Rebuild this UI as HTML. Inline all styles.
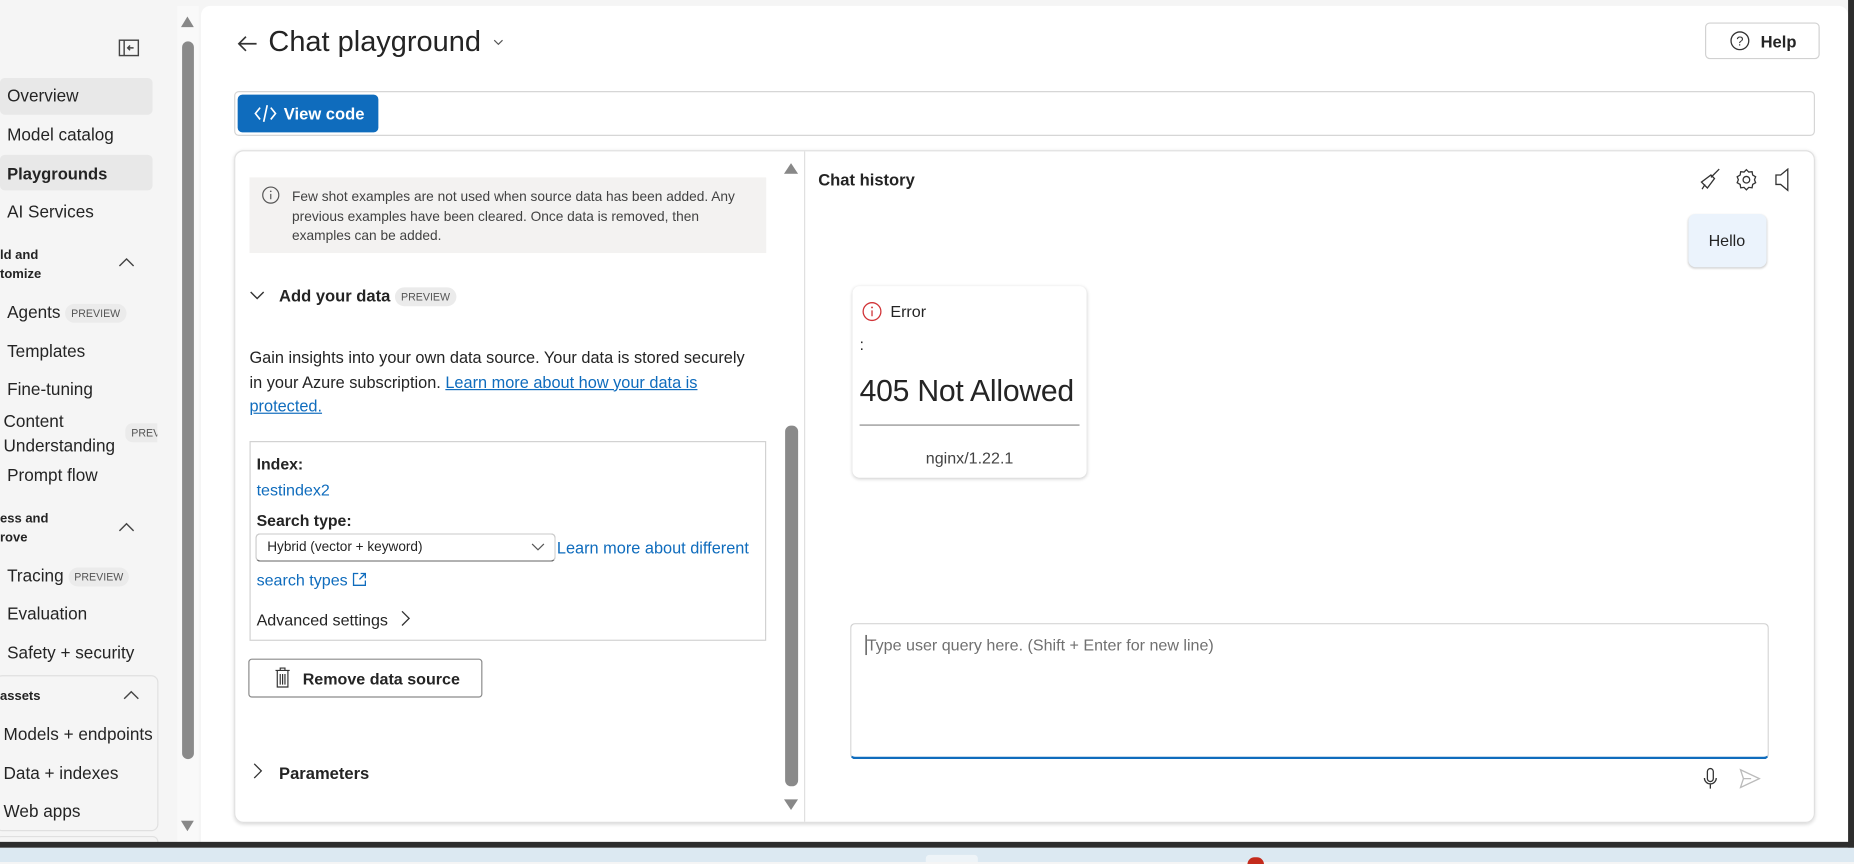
<!DOCTYPE html>
<html><head><meta charset="utf-8">
<style>
*{box-sizing:border-box;margin:0;padding:0}
html,body{width:1854px;height:862px;overflow:hidden;background:#f5f5f5;font-family:"Liberation Sans",sans-serif;color:#242424}
#root{position:absolute;left:0;top:0;width:1568px;height:729px;transform:scale(1.18240);transform-origin:0 0;background:#f5f5f5}
.a{position:absolute}
.nav{font-size:14.5px;color:#242424;white-space:nowrap}
.sel{background:#e8e8e8;border-radius:4px}
.badge{display:inline-block;font-size:9px;font-weight:normal;background:#ebebeb;color:#555;padding:3px 5px;border-radius:8px;vertical-align:middle;margin-left:4px}
.sec{font-size:11px;font-weight:bold;color:#242424;line-height:16px}
.link{color:#0f6cbd}
svg{display:block}
</style></head><body><div id="root">
<svg class="a" style="left:100px;top:33px" width="18" height="15" viewBox="0 0 18 15"><rect x="1" y="1" width="16" height="13" fill="none" stroke="#444" stroke-width="1.2"/><line x1="5" y1="1" x2="5" y2="14" stroke="#444" stroke-width="1.2"/><path d="M13 7.5H8M10 5.5L8 7.5L10 9.5" fill="none" stroke="#444" stroke-width="1.2"/></svg>
<div class="a sel" style="left:0;top:66px;width:129px;height:31px"></div>
<div class="a nav" style="left:6px;top:74px">Overview</div>
<div class="a nav" style="left:6px;top:107px">Model catalog</div>
<div class="a sel" style="left:0;top:131px;width:129px;height:30px"></div>
<div class="a nav" style="left:6px;top:139px;font-weight:bold;font-size:14px">Playgrounds</div>
<div class="a nav" style="left:6px;top:172px">AI Services</div>
<div class="a sec" style="left:0;top:208px">ld and<br>tomize</div>
<svg class="a" style="left:100px;top:217px" width="14" height="9"><path d="M1 8L7 2L13 8" fill="none" stroke="#444" stroke-width="1.2"/></svg>
<div class="a nav" style="left:6px;top:257px">Agents<span class="badge">PREVIEW</span></div>
<div class="a nav" style="left:6px;top:290px">Templates</div>
<div class="a nav" style="left:6px;top:322px">Fine-tuning</div>
<div class="a nav" style="left:3px;top:347px;line-height:21px">Content<br>Understanding</div>
<div class="a badge" style="left:102px;top:358px;width:27px;overflow:hidden;border-radius:6px 0 0 6px">PREVIEW</div>
<div class="a nav" style="left:6px;top:395px">Prompt flow</div>
<div class="a sec" style="left:0;top:431px">ess and<br>rove</div>
<svg class="a" style="left:100px;top:441px" width="14" height="9"><path d="M1 8L7 2L13 8" fill="none" stroke="#444" stroke-width="1.2"/></svg>
<div class="a nav" style="left:6px;top:480px">Tracing<span class="badge">PREVIEW</span></div>
<div class="a nav" style="left:6px;top:512px">Evaluation</div>
<div class="a nav" style="left:6px;top:545px">Safety + security</div>
<div class="a" style="left:-4px;top:571px;width:138px;height:132px;border:1px solid #e0e0e0;border-radius:6px"></div>
<div class="a sec" style="left:0;top:581px">assets</div>
<svg class="a" style="left:104px;top:583px" width="14" height="9"><path d="M1 8L7 2L13 8" fill="none" stroke="#444" stroke-width="1.2"/></svg>
<div class="a nav" style="left:3px;top:614px">Models + endpoints</div>
<div class="a nav" style="left:3px;top:647px">Data + indexes</div>
<div class="a nav" style="left:3px;top:679px">Web apps</div>
<div class="a" style="left:-4px;top:707px;width:138px;height:10px;border:1px solid #e0e0e0;border-radius:6px"></div>
<div class="a" style="left:150px;top:5px;width:18px;height:707px;background:#f9f9f9"></div>
<svg class="a" style="left:153px;top:14px" width="11" height="9"><path d="M0 9L5.5 0L11 9Z" fill="#888"/></svg>
<div class="a" style="left:154px;top:35px;width:10px;height:607px;background:#8a8a8a;border-radius:5px"></div>
<svg class="a" style="left:153px;top:694px" width="11" height="9"><path d="M0 0L5.5 9L11 0Z" fill="#888"/></svg>
<div class="a" style="left:170px;top:5px;width:1393px;height:707px;background:#fff;border-radius:8px 8px 0 0"></div>
<svg class="a" style="left:200px;top:29px" width="18" height="16"><path d="M17 8H2M8 2L2 8L8 14" fill="none" stroke="#333" stroke-width="1.4"/></svg>
<div class="a" style="left:227px;top:22px;font-size:24.5px;font-weight:500;color:#242424">Chat playground</div>
<svg class="a" style="left:417px;top:33px" width="9" height="6"><path d="M1 1L4.5 4.5L8 1" fill="none" stroke="#555" stroke-width="1"/></svg>
<div class="a" style="left:1442px;top:19px;width:97px;height:31px;border:1px solid #d1d1d1;border-radius:4px"></div>
<svg class="a" style="left:1463px;top:26px" width="17" height="17"><circle cx="8.5" cy="8.5" r="7.5" fill="none" stroke="#333" stroke-width="1.1"/><text x="8.5" y="12.5" text-anchor="middle" font-size="11" font-family="Liberation Sans" fill="#333">?</text></svg>
<div class="a" style="left:1489px;top:27px;font-size:14px;font-weight:bold;color:#242424">Help</div>
<div class="a" style="left:198px;top:77px;width:1337px;height:38px;border:1px solid #d6d6d6;border-radius:4px"></div>
<div class="a" style="left:201px;top:80px;width:119px;height:32px;background:#0f6cbd;border-radius:4px"></div>
<svg class="a" style="left:215px;top:88px" width="19" height="16"><path d="M5 3L1 8L5 13M14 3L18 8L14 13M11 1L8 15" fill="none" stroke="#fff" stroke-width="1.4"/></svg>
<div class="a" style="left:240px;top:88px;font-size:14px;font-weight:bold;color:#fff">View code</div>
<div class="a" style="left:198px;top:127px;width:1337px;height:569px;border:1px solid #e0e0e0;border-radius:8px;box-shadow:0 1px 3px rgba(0,0,0,.15)"></div>
<div class="a" style="left:680px;top:128px;width:1px;height:567px;background:#e0e0e0"></div>
<svg class="a" style="left:663px;top:138px" width="12" height="9"><path d="M0 9L6 0L12 9Z" fill="#888"/></svg>
<div class="a" style="left:664px;top:360px;width:11px;height:305px;background:#8a8a8a;border-radius:5px"></div>
<svg class="a" style="left:663px;top:676px" width="12" height="9"><path d="M0 0L6 9L12 0Z" fill="#888"/></svg>
<div class="a" style="left:211px;top:150px;width:437px;height:64px;background:#f3f2f1"></div>
<svg class="a" style="left:221px;top:157px" width="16" height="16"><circle cx="8" cy="8" r="6.8" fill="none" stroke="#555" stroke-width="1"/><line x1="8" y1="7" x2="8" y2="11.5" stroke="#555"/><circle cx="8" cy="4.8" r=".7" fill="#555"/></svg>
<div class="a" style="left:247px;top:159px;white-space:nowrap;font-size:11.6px;line-height:16.5px;color:#424242">Few shot examples are not used when source data has been added. Any<br>previous examples have been cleared. Once data is removed, then<br>examples can be added.</div>
<svg class="a" style="left:211px;top:246px" width="13" height="8"><path d="M1 1L6.5 6.5L12 1" fill="none" stroke="#333" stroke-width="1.2"/></svg>
<div class="a" style="left:236px;top:242px;font-size:14px;font-weight:bold;color:#242424">Add your data<span class="badge">PREVIEW</span></div>
<div class="a" style="left:211px;top:293px;white-space:nowrap;font-size:13.8px;line-height:20.5px;color:#242424">Gain insights into your own data source. Your data is stored securely<br>in your Azure subscription. <span class="link" style="text-decoration:underline">Learn more about how your data is<br>protected.</span></div>
<div class="a" style="left:211px;top:373px;width:437px;height:169px;border:1px solid #d1d1d1"></div>
<div class="a" style="left:217px;top:385px;font-size:13.4px;font-weight:bold">Index:</div>
<div class="a link" style="left:217px;top:407px;font-size:13.6px">testindex2</div>
<div class="a" style="left:217px;top:433px;font-size:13.4px;font-weight:bold">Search type:</div>
<div class="a" style="left:216px;top:451px;width:254px;height:24px;border:1px solid #c8c8c8;border-bottom-color:#666;border-radius:4px"></div>
<div class="a" style="left:226px;top:457px;font-size:11.5px;color:#242424">Hybrid (vector + keyword)</div>
<svg class="a" style="left:449px;top:459px" width="12" height="7"><path d="M1 1L6 6L11 1" fill="none" stroke="#555" stroke-width="1"/></svg>
<div class="a link" style="left:471px;top:456px;font-size:13.8px">Learn more about different</div>
<div class="a link" style="left:217px;top:483px;font-size:13.6px">search types</div>
<svg class="a" style="left:297px;top:483px" width="14" height="14"><path d="M6 2H2V12H12V8M8 2H12V6M12 2L7 7" fill="none" stroke="#0f6cbd" stroke-width="1.1"/></svg>
<div class="a" style="left:217px;top:517px;font-size:13.6px">Advanced settings</div>
<svg class="a" style="left:339px;top:516px" width="8" height="14"><path d="M1 1L7 7L1 13" fill="none" stroke="#333" stroke-width="1.1"/></svg>
<div class="a" style="left:210px;top:557px;width:198px;height:33px;border:1px solid #8a8a8a;border-radius:3px"></div>
<svg class="a" style="left:232px;top:564px" width="14" height="18"><path d="M1 3H13M5 3V1H9V3M2.5 3V17H11.5V3M5 6V15M7 6V15M9 6V15" fill="none" stroke="#333" stroke-width="1"/></svg>
<div class="a" style="left:256px;top:567px;font-size:13.6px;font-weight:bold">Remove data source</div>
<svg class="a" style="left:214px;top:645px" width="8" height="14"><path d="M1 1L7 7L1 13" fill="none" stroke="#333" stroke-width="1.1"/></svg>
<div class="a" style="left:236px;top:646px;font-size:14px;font-weight:bold">Parameters</div>
<div class="a" style="left:692px;top:144px;font-size:14px;font-weight:bold">Chat history</div>
<svg class="a" style="left:1436px;top:142px" width="20" height="20"><path d="M18 1L11 8M11 6L14 9L8 17L3 12Z M6 14L3.5 18" fill="none" stroke="#333" stroke-width="1.1"/></svg>
<svg class="a" style="left:1467px;top:142px" width="20" height="20"><path d="M10 1.5L12 3.5L14.8 3.2L15.3 6L17.8 7.5L16.8 10L17.8 12.5L15.3 14L14.8 16.8L12 16.5L10 18.5L8 16.5L5.2 16.8L4.7 14L2.2 12.5L3.2 10L2.2 7.5L4.7 6L5.2 3.2L8 3.5Z" fill="none" stroke="#333" stroke-width="1.1"/><circle cx="10" cy="10" r="2.8" fill="none" stroke="#333" stroke-width="1.1"/></svg>
<svg class="a" style="left:1500px;top:142px" width="14" height="20"><path d="M12 1V19L6 14H2V6H6Z" fill="none" stroke="#333" stroke-width="1.1"/></svg>
<div class="a" style="left:1428px;top:181px;width:66px;height:45px;background:#ebf3fc;border-radius:6px;box-shadow:0 1px 2px rgba(0,0,0,.2)"></div>
<div class="a" style="left:1445px;top:196px;font-size:13.6px">Hello</div>
<div class="a" style="left:721px;top:242px;width:198px;height:162px;background:#fff;border-radius:6px;box-shadow:0 1px 3px rgba(0,0,0,.2)"></div>
<svg class="a" style="left:729px;top:255px" width="17" height="17"><circle cx="8.5" cy="8.5" r="7.5" fill="none" stroke="#d13438" stroke-width="1.1"/><line x1="8.5" y1="7.5" x2="8.5" y2="12.5" stroke="#d13438" stroke-width="1.1"/><circle cx="8.5" cy="5" r=".8" fill="#d13438"/></svg>
<div class="a" style="left:753px;top:256px;font-size:13.6px">Error</div>
<div class="a" style="left:727px;top:284px;font-size:13px">:</div>
<div class="a" style="left:727px;top:317px;font-size:25.5px;font-weight:500;white-space:nowrap;letter-spacing:-.2px">405 Not Allowed</div>
<div class="a" style="left:727px;top:359px;width:186px;height:1px;background:#888"></div>
<div class="a" style="left:721px;top:380px;width:198px;text-align:center;font-size:13.6px;color:#424242">nginx/1.22.1</div>
<div class="a" style="left:719px;top:527px;width:777px;height:115px;border:1px solid #d1d1d1;border-bottom:2px solid #0f6cbd;border-radius:4px"></div>
<div class="a" style="left:732px;top:537px;width:1px;height:17px;background:#333"></div>
<div class="a" style="left:733px;top:538px;font-size:13.6px;color:#707070">Type user query here. (Shift + Enter for new line)</div>
<svg class="a" style="left:1440px;top:649px" width="13" height="19"><rect x="4" y="1" width="5" height="11" rx="2.5" fill="none" stroke="#333" stroke-width="1.1"/><path d="M1.5 9A5 5 0 0 0 11.5 9M6.5 14V18" fill="none" stroke="#333" stroke-width="1.1"/></svg>
<svg class="a" style="left:1471px;top:650px" width="18" height="17"><path d="M1 1L17 8.5L1 16L3.5 8.5Z M3.5 8.5H10" fill="none" stroke="#bbb" stroke-width="1.1"/></svg>
<div class="a" style="left:1563px;top:0;width:5px;height:717px;background:#2d2d2d"></div>
<div class="a" style="left:0;top:712px;width:1568px;height:5px;background:#2d2d2d"></div>
<div class="a" style="left:0;top:717px;width:1568px;height:12px;background:#dce9f2"></div>
<div class="a" style="left:783px;top:723px;width:44px;height:6px;background:#eef4f8;border-radius:3px 3px 0 0"></div>
<div class="a" style="left:1055px;top:725px;width:14px;height:6px;background:#c42b1c;border-radius:7px 7px 0 0"></div>
</div></body></html>
